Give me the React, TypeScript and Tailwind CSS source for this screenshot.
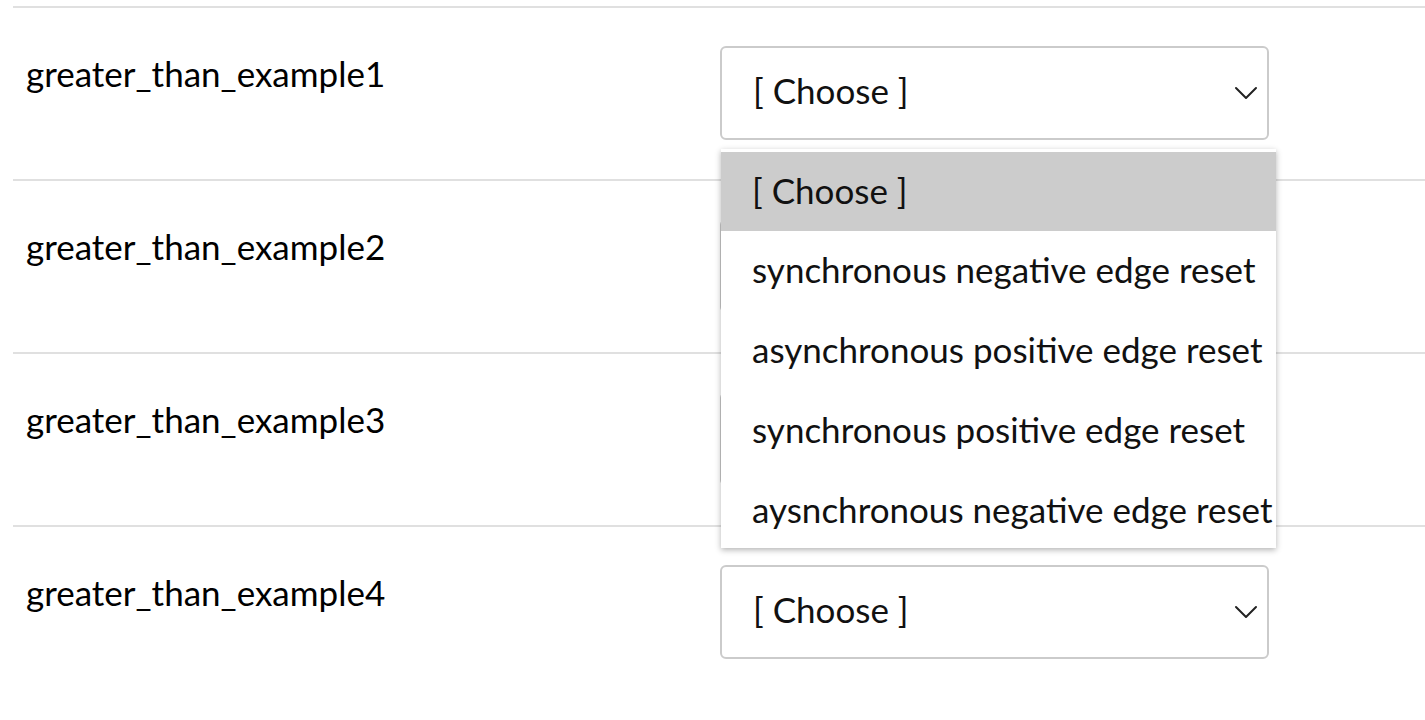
const rows = [
  "greater_than_example1",
  "greater_than_example2",
  "greater_than_example3",
  "greater_than_example4",
];

const options = [
  "[ Choose ]",
  "synchronous negative edge reset",
  "asynchronous positive edge reset",
  "synchronous positive edge reset",
  "aysnchronous negative edge reset",
];

function Chevron() {
  return (
    <svg width="24" height="14" viewBox="0 0 24 14" fill="none" className="shrink-0">
      <path d="M2 2l10 10L22 2" stroke="#222" strokeWidth="2" strokeLinecap="round" strokeLinejoin="round" />
    </svg>
  );
}

function Select() {
  return (
    <div className="flex h-[94px] w-[549px] items-center justify-between rounded-[6px] border-2 border-[#cbcbcb] bg-white pl-[31px] pr-[9px] text-[35px] leading-[42px] text-[#111]">
      <span className="-mt-[6px]">[ Choose ]</span>
      <Chevron />
    </div>
  );
}

function Dropdown() {
  return (
    <div className="absolute left-[708px] top-[141px] z-10 h-[399px] w-[555px] overflow-hidden bg-white pt-[3px] shadow-[0_2px_6px_rgba(0,0,0,0.3)]">
      {options.map((o, i) => (
        <div
          key={o}
          className={
            "flex items-center whitespace-nowrap pb-[4px] pl-[31px] text-[35px] leading-[42px] text-[#111] " +
            (i === 0 ? "h-[79px] bg-[#cccccc]" : "h-[80px]")
          }
        >
          {o}
        </div>
      ))}
    </div>
  );
}

export default function App() {
  return (
    <div className="min-h-[720px] bg-white pl-[13px] pt-[6px] font-['Lato',sans-serif]">
      {rows.map((r, i) => (
        <div key={r} className="relative flex h-[173px] border-t-2 border-[#e0e0e0]">
          <div className="w-[707px] pl-[13px] pt-[44px] text-[35px] leading-[42px] text-black">{r}</div>
          <div className="pt-[38px]">
            <Select />
          </div>
          {i === 0 && <Dropdown />}
        </div>
      ))}
    </div>
  );
}
